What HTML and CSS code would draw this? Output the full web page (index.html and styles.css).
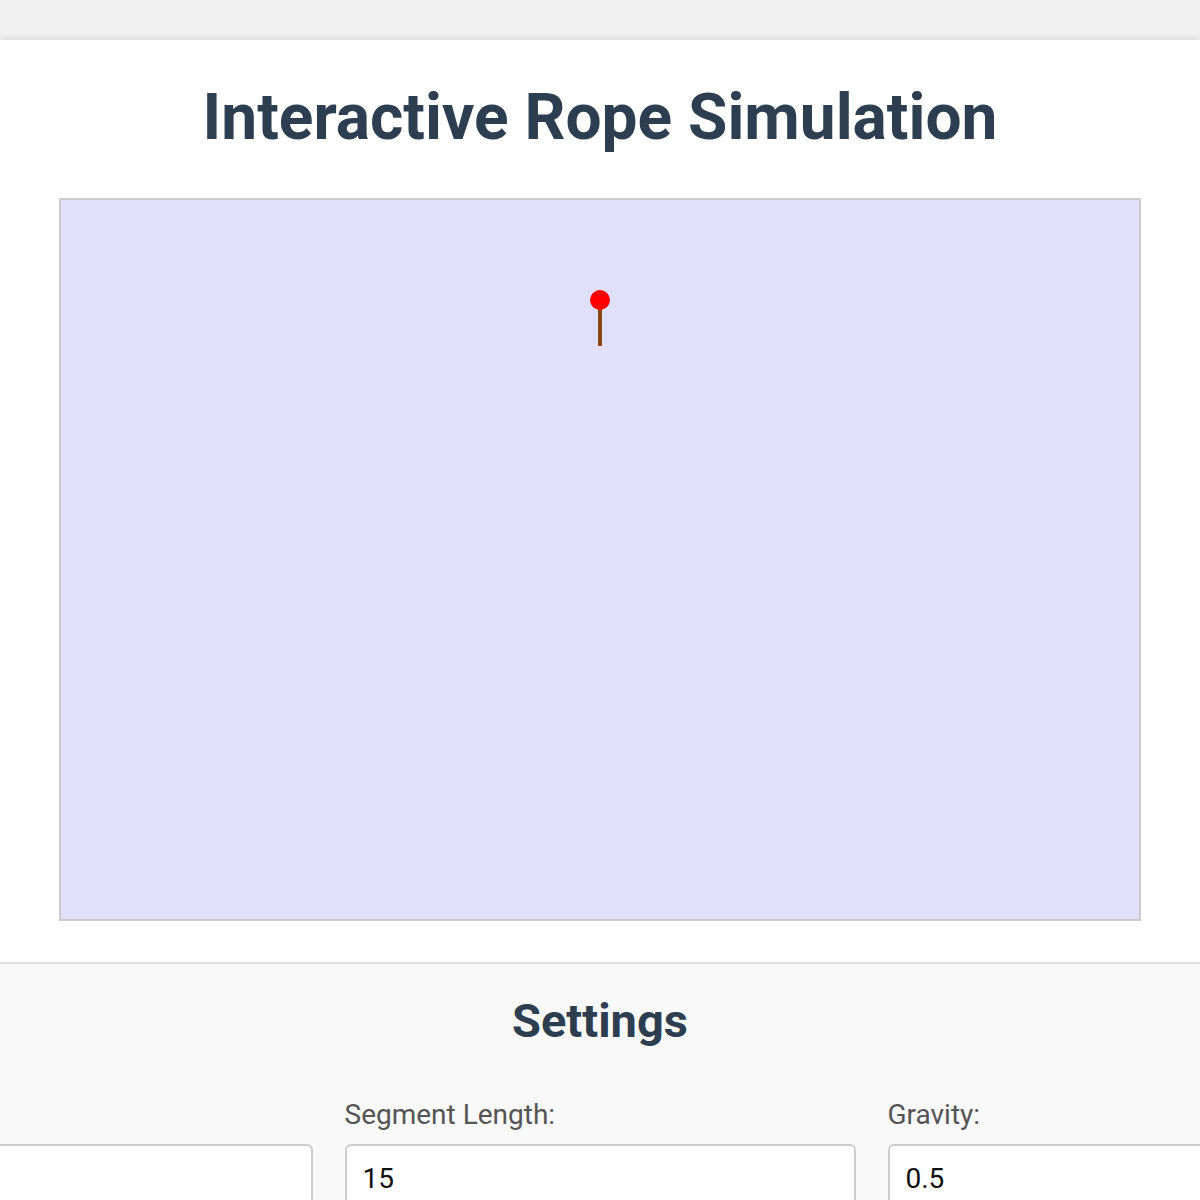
FILE: index.html
```html
<!DOCTYPE html>
<html>
<head>
<meta charset="utf-8">
<title>Interactive Rope Simulation</title>
<link rel="stylesheet" href="styles.css">
</head>
<body>
<div class="app">
  <h1 class="title">Interactive Rope Simulation</h1>
  <div class="stage">
    <svg class="rope" width="1078" height="719" viewBox="0 0 1078 719">
      <line x1="539" y1="100" x2="539" y2="146" stroke="#8b4513" stroke-width="4"/>
      <circle cx="539" cy="100" r="10" fill="#ff0000"/>
    </svg>
  </div>
  <section class="settings">
    <h2 class="settings-title">Settings</h2>
    <div class="fields">
      <div class="field">
        <label class="label">Segments:</label>
        <input class="input" type="text" value="20">
      </div>
      <div class="field">
        <label class="label">Segment Length:</label>
        <input class="input" type="text" value="15">
      </div>
      <div class="field">
        <label class="label">Gravity:</label>
        <input class="input" type="text" value="0.5">
      </div>
    </div>
  </section>
</div>
</body>
</html>
```
FILE: styles.css
```css
html, body {
  margin: 0;
  padding: 0;
}
body {
  background: #efefef;
  font-family: Roboto, "Liberation Sans", sans-serif;
  overflow: hidden;
}
.app {
  margin-top: 40px;
  background: #ffffff;
  box-shadow: 0 -2px 6px rgba(0, 0, 0, 0.08);
  overflow: hidden;
}
.title {
  margin: 0;
  padding-top: 38px;
  height: 120px;
  text-align: center;
  font-size: 64px;
  line-height: 80px;
  font-weight: 700;
  color: #2c3e50;
}
.stage {
  margin: 0 59px;
  height: 719px;
  border: 2px solid #cccccc;
  background: #e0e0fa;
  display: flex;
  justify-content: center;
}
.rope {
  display: block;
}
.settings {
  margin-top: 41px;
  border-top: 2px solid #dddddd;
  background: #f9f9f9;
  padding-top: 22px;
  height: 300px;
}
.settings-title {
  margin: 0;
  text-align: center;
  font-size: 47px;
  line-height: 70px;
  font-weight: 700;
  color: #2c3e50;
}
.fields {
  margin-top: 41px;
  display: flex;
  justify-content: center;
  gap: 32px;
}
.field {
  flex: 0 0 511px;
  display: flex;
  flex-direction: column;
  gap: 11px;
}
.label {
  font-size: 28px;
  line-height: 36px;
  color: #555555;
}
.input {
  box-sizing: border-box;
  width: 511px;
  height: 68px;
  border: 2px solid #cccccc;
  border-radius: 6px;
  background: #ffffff;
  padding: 0 16px;
  font-family: Roboto, "Liberation Sans", sans-serif;
  font-size: 28px;
  color: #111111;
}
```
